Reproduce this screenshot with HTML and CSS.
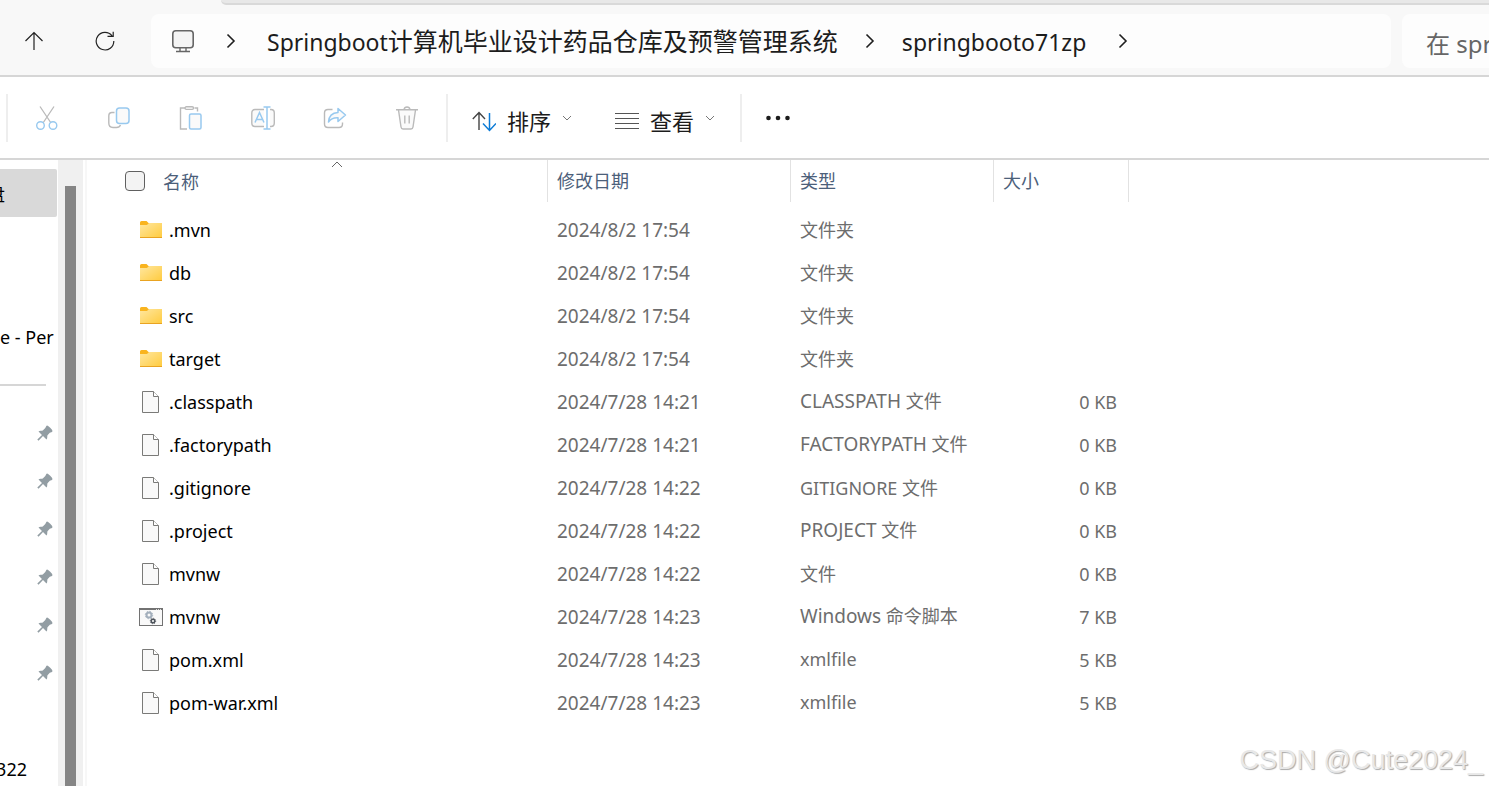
FILE: index.html
```html
<!DOCTYPE html>
<html lang="zh-CN">
<head>
    <meta charset="UTF-8">
    <meta name="viewport" content="width=device-width, initial-scale=1.0">
    <title>springbooto71zp</title>
    <link rel="stylesheet" href="styles.css">
</head>
<body>

    <!-- shared icons -->
    <svg class="sprite" aria-hidden="true">
        <symbol id="folder" viewBox="0 0 24 24">
            <path d="M1 5.5V4.5Q1 3 2.500 3H7.500L9.500 5H23V12H1Z" fill="#f9b41f"/>
            <path d="M1 7H8L10 5H23V20H1Z" fill="url(#folderFill)"/>
            <path d="M1 19.500H23" stroke="#e9a321" stroke-width="1"/>
        </symbol>
        <symbol id="file" viewBox="0 0 24 24">
            <path d="M3.500 1.500H14.500L19.500 6.500V22.500H3.500Z" fill="#f9f9f9" stroke="#7a7a78"/>
            <path d="M14.500 1.500V6.500H19.500" fill="#fff" stroke="#7a7a78"/>
        </symbol>
        <symbol id="script" viewBox="0 0 24 24">
            <rect x="0.500" y="3.500" width="23" height="17" fill="#f9f9f9" stroke="#727272"/>
            <path d="M1 4.500H23" stroke="#727272"/>
            <path d="M17 4.500H23" stroke="#ddd" stroke-dasharray="1 1"/>
            <circle cx="10" cy="10" r="2.500" fill="none" stroke="#a3afbc" stroke-width="2"/>
            <circle cx="10" cy="10" r="3.700" fill="none" stroke="#a3afbc" stroke-dasharray="1.400 1.500"/>
            <circle cx="14" cy="16" r="1.800" fill="none" stroke="#4d535b" stroke-width="1.500"/>
            <circle cx="14" cy="16" r="2.700" fill="none" stroke="#4d535b" stroke-dasharray="1 1.120"/>
        </symbol>
        <symbol id="pin" viewBox="0 0 16 16">
            <path d="M10 0.500C11 0.200 15.500 4.700 15.500 6C15.500 7.500 13.500 7 12.800 7.800L10.500 10.200C10 11 10.700 13.500 9.500 14.500L6 11L1.500 15.700L0.300 14.500L5 10L1.500 6.500C2.500 5.200 5 6 5.800 5.400L8.300 3C9 2.200 8.800 1 10 0.500Z" fill="#929da3"/>
        </symbol>
        <symbol id="chevron" viewBox="0 0 10 16">
            <path d="M1.500 1.500L8 8L1.500 14.500" fill="none" stroke="#1f1f1f" stroke-width="1.600"/>
        </symbol>
        <symbol id="down" viewBox="0 0 10 6">
            <path d="M1 1L5 5L9 1" fill="none" stroke="#777"/>
        </symbol>
        <linearGradient id="folderFill" x1="0" y1="0" x2="1" y2="1">
            <stop offset="0" stop-color="#ffe7a0"/>
            <stop offset="1" stop-color="#ffcb3e"/>
        </linearGradient>
    </svg>

    <div class="tabs"><div class="tab-strip"></div></div>

    <header class="address-row">
        <button class="nav-btn up" aria-label="上移">
            <svg width="20" height="20" viewBox="0 0 20 20"><path d="M10 19V1.500M1.500 10L10 1.500L18.500 10" fill="none" stroke="#222" stroke-width="1.200"/></svg>
        </button>
        <button class="nav-btn" aria-label="刷新">
            <svg width="20" height="20" viewBox="0 0 20 20"><path d="M18.800 10A8.800 8.800 0 1 1 17 4.800M18.200 0.800V5.300H12.500" fill="none" stroke="#222" stroke-width="1.200"/></svg>
        </button>
        <nav class="address">
            <svg class="pc" viewBox="0 0 24 24"><rect x="1.800" y="1.800" width="20.400" height="17" rx="3" fill="#f4f4f4" stroke="#666" stroke-width="1.600"/><path d="M9 19V22M15 19V22M5 22.500H19" fill="none" stroke="#666" stroke-width="1.400"/></svg>
            <svg class="chevron first"><use href="#chevron"/></svg>
            <button class="crumb">Springboot<span class="zh">计算机毕业设计药品仓库及预警管理系统</span></button>
            <svg class="chevron"><use href="#chevron"/></svg>
            <button class="crumb">springbooto71zp</button>
            <svg class="chevron last"><use href="#chevron"/></svg>
        </nav>
        <input class="search" type="text" aria-label="搜索" placeholder="在 springbooto71zp 中搜索">
    </header>

    <div class="toolbar">
        <span class="sep"></span>
        <div class="tools">
            <button class="tool" aria-label="剪切">
                <svg viewBox="0 0 24 24"><g fill="none" stroke="#bababa" stroke-width="1.300"><path d="M5 0.500L16 17M19 0.500L8 17"/></g><g fill="#fff" stroke="#98c9ef" stroke-width="1.400"><circle cx="5.500" cy="19.500" r="3.800"/><circle cx="18" cy="19.500" r="3.800"/></g></svg>
            </button>
            <button class="tool" aria-label="复制">
                <svg viewBox="0 0 24 24"><path d="M7.500 6.500H5Q1.800 6.500 1.800 10V17Q1.800 21.500 6 21.500H9.500Q12.500 21.500 13.500 19" fill="none" stroke="#bababa" stroke-width="1.400"/><rect x="9.500" y="2" width="12.500" height="15.500" rx="3" fill="#fafafa" stroke="#98c9ef" stroke-width="1.500"/></svg>
            </button>
            <button class="tool" aria-label="粘贴">
                <svg viewBox="0 0 24 24"><path d="M8 2H1.500V23H8M15.500 2H18.500V5.500" fill="none" stroke="#bababa" stroke-width="1.400"/><rect x="6" y="0.800" width="8.500" height="2.600" rx="1.300" fill="#fff" stroke="#bababa" stroke-width="1.400"/><rect x="10.500" y="8" width="11.500" height="15" rx="1.500" fill="#fafafa" stroke="#98c9ef" stroke-width="1.500"/></svg>
            </button>
            <button class="tool" aria-label="重命名">
                <svg viewBox="0 0 24 24"><path d="M13 3.500H4Q0.800 3.500 0.800 7V17Q0.800 20.500 4 20.500H13M19 3.500H20Q23.300 3.500 23.300 7V17Q23.300 20.500 20 20.500H19" fill="#fafafa" stroke="#bababa" stroke-width="1.400"/><path d="M4 16.500L8.500 6.500L13 16.500M5.500 13.500H11.500M16 1V23M12.500 1H19.500M12.500 23H19.500" fill="none" stroke="#98c9ef" stroke-width="1.500"/></svg>
            </button>
            <button class="tool" aria-label="共享">
                <svg viewBox="0 0 24 24"><path d="M9.500 3.500H5Q1.500 3.500 1.500 7V18Q1.500 21.500 5 21.500H16Q19.500 21.500 19.500 18V16.500" fill="none" stroke="#bababa" stroke-width="1.400"/><path d="M15 2.500L22.500 9L15 15.500V11.800Q8.500 11.500 5.500 16Q6 7 15 6.500Z" fill="#fafafa" stroke="#98c9ef" stroke-width="1.500" stroke-linejoin="round"/></svg>
            </button>
            <button class="tool" aria-label="删除">
                <svg viewBox="0 0 24 24"><path d="M3.500 4L6 21Q6.300 23 8 23H16Q17.700 23 18 21L20.500 4" fill="#fafafa" stroke="#bababa" stroke-width="1.400"/><path d="M1 3.800H23M9 3.500Q9.500 1 12 1T15 3.500M9.800 9.500V17.500M14.200 9.500V17.500" fill="none" stroke="#bababa" stroke-width="1.400"/></svg>
            </button>
        </div>
        <span class="sep"></span>
        <div class="menus">
            <button class="menu">
                <svg class="menu-icon" viewBox="0 0 24 24"><path d="M7 21V3.500M0.800 10L7 3.500L13 10" fill="none" stroke="#444" stroke-width="1.400"/><path d="M17.500 4V21.500M11 14.500L17.500 21.500L24 14.500" fill="none" stroke="#0c7bd6" stroke-width="1.500"/></svg>
                <span>排序</span>
                <svg class="down"><use href="#down"/></svg>
            </button>
            <button class="menu">
                <svg class="menu-icon" viewBox="0 0 24 24"><path d="M0 4.500H24M0 9.500H24M0 14.500H24M0 19.500H24" fill="none" stroke="#555" stroke-width="1.200"/></svg>
                <span>查看</span>
                <svg class="down"><use href="#down"/></svg>
            </button>
        </div>
        <span class="sep"></span>
        <button class="more" aria-label="更多">
            <svg viewBox="0 0 24 24"><g fill="#1c1c1c"><circle cx="2.500" cy="12" r="2.300"/><circle cx="12" cy="12" r="2.300"/><circle cx="21.500" cy="12" r="2.300"/></g></svg>
        </button>
    </div>

    <div class="main">
        <aside class="sidebar">
            <div class="side-item selected"><span>网盘</span></div>
            <div class="side-item"></div>
            <div class="side-item"></div>
            <div class="side-item"><span>e - Per</span></div>
            <div class="side-item"><hr></div>
            <div class="side-item pinned"><svg><use href="#pin"/></svg></div>
            <div class="side-item pinned"><svg><use href="#pin"/></svg></div>
            <div class="side-item pinned"><svg><use href="#pin"/></svg></div>
            <div class="side-item pinned"><svg><use href="#pin"/></svg></div>
            <div class="side-item pinned"><svg><use href="#pin"/></svg></div>
            <div class="side-item pinned"><svg><use href="#pin"/></svg></div>
            <div class="side-item"></div>
            <div class="side-item recent"><span>322</span></div>
        </aside>
        <div class="scrollbar"><div class="thumb"></div></div>

        <div class="content">
            <table class="files">
                <thead>
                    <tr>
                        <th class="col-name">
                            <svg class="sort-mark" viewBox="0 0 12 7"><path d="M1 6L6 1L11 6" fill="none" stroke="#666"/></svg>
                            <div class="name-head"><input type="checkbox" id="selectAll" aria-label="全选"><label for="selectAll">名称</label></div>
                        </th>
                        <th class="col-date">修改日期</th>
                        <th class="col-type">类型</th>
                        <th class="col-size">大小</th>
                    </tr>
                </thead>
                <tbody>
                    <tr><td><div class="name"><svg><use href="#folder"/></svg>.mvn</div></td><td class="date">2024/8/2 17:54</td><td class="type">文件夹</td><td></td></tr>
                    <tr><td><div class="name"><svg><use href="#folder"/></svg>db</div></td><td class="date">2024/8/2 17:54</td><td class="type">文件夹</td><td></td></tr>
                    <tr><td><div class="name"><svg><use href="#folder"/></svg>src</div></td><td class="date">2024/8/2 17:54</td><td class="type">文件夹</td><td></td></tr>
                    <tr><td><div class="name"><svg><use href="#folder"/></svg>target</div></td><td class="date">2024/8/2 17:54</td><td class="type">文件夹</td><td></td></tr>
                    <tr><td><div class="name"><svg><use href="#file"/></svg>.classpath</div></td><td class="date">2024/7/28 14:21</td><td class="type"><span class="ext">CLASSPATH</span> 文件</td><td class="size">0 KB</td></tr>
                    <tr><td><div class="name"><svg><use href="#file"/></svg>.factorypath</div></td><td class="date">2024/7/28 14:21</td><td class="type"><span class="ext">FACTORYPATH</span> 文件</td><td class="size">0 KB</td></tr>
                    <tr><td><div class="name"><svg><use href="#file"/></svg>.gitignore</div></td><td class="date">2024/7/28 14:22</td><td class="type">GITIGNORE 文件</td><td class="size">0 KB</td></tr>
                    <tr><td><div class="name"><svg><use href="#file"/></svg>.project</div></td><td class="date">2024/7/28 14:22</td><td class="type"><span class="ext">PROJECT</span> 文件</td><td class="size">0 KB</td></tr>
                    <tr><td><div class="name"><svg><use href="#file"/></svg>mvnw</div></td><td class="date">2024/7/28 14:22</td><td class="type">文件</td><td class="size">0 KB</td></tr>
                    <tr><td><div class="name"><svg><use href="#script"/></svg>mvnw</div></td><td class="date">2024/7/28 14:23</td><td class="type"><span class="ext">Windows</span> 命令脚本</td><td class="size">7 KB</td></tr>
                    <tr><td><div class="name"><svg><use href="#file"/></svg>pom.xml</div></td><td class="date">2024/7/28 14:23</td><td class="type">xmlfile</td><td class="size">5 KB</td></tr>
                    <tr><td><div class="name"><svg><use href="#file"/></svg>pom-war.xml</div></td><td class="date">2024/7/28 14:23</td><td class="type">xmlfile</td><td class="size">5 KB</td></tr>
                </tbody>
            </table>
        </div>
    </div>

    <div class="watermark">CSDN @Cute2024_</div>

</body>
</html>
```
FILE: styles.css
```css
* {
    box-sizing: border-box;
}

body {
    margin: 0;
    height: 100vh;
    display: flex;
    flex-direction: column;
    overflow: hidden;
    background-color: #ffffff;
    color: #000000;
    font-family: "Noto Sans", "Noto Sans CJK SC", sans-serif;
    font-size: 18px;
}

button {
    border: none;
    padding: 0;
    background: none;
    font-family: inherit;
    color: #1c1c1c;
    cursor: pointer;
}

svg {
    display: block;
    flex: none;
}

.sprite {
    position: absolute;
    width: 0;
    height: 0;
}

/* tab strip */
.tabs {
    background-color: #f8f8f8;
    padding-left: 221px;
}

.tab-strip {
    height: 5px;
    background-color: #e8e8e8;
    border-bottom: 2px solid #d9d9d9;
    border-bottom-left-radius: 5px;
}

/* address bar */
.address-row {
    display: flex;
    align-items: center;
    height: 72px;
    padding-top: 1px;
    background-color: #f8f8f8;
    border-bottom: 2px solid #d6d6d6;
}

.nav-btn {
    display: flex;
    justify-content: center;
    align-items: center;
    width: 76px;
    height: 48px;
}

.nav-btn.up {
    width: 67px;
}

.address {
    flex: 1;
    display: flex;
    align-items: center;
    height: 54px;
    margin: 0 11px 0 8px;
    padding-left: 20px;
    border-radius: 8px;
    background-color: #fdfdfd;
}

.pc {
    width: 24px;
    height: 24px;
}

.chevron {
    width: 10px;
    height: 16px;
    margin: 0 27px;
}

.chevron.first {
    margin: 0 31px;
}

.chevron.last {
    margin-left: 32px;
}

.crumb {
    padding-top: 2px;
    font-size: 23px;
    line-height: 32px;
    white-space: nowrap;
}

.zh {
    font-size: 25px;
}

.search {
    width: 87px;
    height: 54px;
    padding: 6px 0 0 24px;
    border: none;
    border-radius: 8px 0 0 8px;
    background-color: #fdfdfd;
    font-family: inherit;
    font-size: 24px;
}

.search::placeholder {
    color: #666666;
    opacity: 1;
}

/* command bar */
.toolbar {
    display: flex;
    align-items: center;
    height: 83px;
    padding-left: 6px;
    border-bottom: 2px solid #d6d6d6;
}

.sep {
    width: 2px;
    height: 48px;
    background-color: #eeeeee;
}

.tools {
    display: flex;
    padding: 0 3px;
}

.tool {
    display: flex;
    justify-content: center;
    align-items: center;
    width: 72px;
    height: 48px;
}

.tool svg,
.menu-icon,
.more svg {
    width: 24px;
    height: 24px;
}

.menus {
    display: flex;
    gap: 43px;
    padding: 6px 25px 0 24px;
}

.menu {
    display: flex;
    align-items: center;
    gap: 11px;
    font-size: 22px;
    line-height: 32px;
}

.down {
    width: 10px;
    height: 6px;
    margin-bottom: 6px;
}

.more {
    padding: 12px 24px;
}

/* navigation pane */
.main {
    flex: 1;
    display: flex;
    min-height: 0;
}

.sidebar {
    width: 58px;
    padding: 9px 1px 0 0;
    overflow: hidden;
}

.side-item {
    display: flex;
    align-items: center;
    height: 48px;
    overflow: hidden;
    white-space: nowrap;
}

.side-item hr {
    width: 46px;
    height: 2px;
    margin: 0;
    border: none;
    background-color: #d6d6d6;
}

.selected {
    justify-content: flex-end;
    padding-right: 52px;
    background-color: #d9d9d9;
    border-radius: 0 2px 2px 0;
}

.pinned {
    justify-content: flex-end;
    padding-right: 4px;
}

.pinned svg {
    width: 16px;
    height: 16px;
}

.recent {
    justify-content: flex-end;
    padding-right: 30px;
}

.scrollbar {
    width: 25px;
    padding: 26px 7px 0;
    background-color: #f0f0f0;
}

.thumb {
    height: 100%;
    background-color: #858585;
}

/* file list */
.content {
    flex: 1;
    margin-left: 2px;
    border-left: 2px solid #f7f7f7;
}

.files {
    border-collapse: separate;
    border-spacing: 0;
    table-layout: fixed;
    width: 1042px;
}

.files th {
    height: 42px;
    padding: 0 9px 2px;
    border-right: 1px solid #e2e2e2;
    color: #4c607a;
    font-weight: normal;
    text-align: left;
}

.files .col-name {
    position: relative;
    width: 461px;
    padding: 0 0 0 38px;
}

.col-date {
    width: 243px;
}

.col-type {
    width: 203px;
}

.col-size {
    width: 135px;
}

.sort-mark {
    position: absolute;
    top: 1px;
    left: 244px;
    width: 12px;
    height: 7px;
}

.name-head {
    display: flex;
    align-items: center;
    gap: 18px;
}

.name-head input {
    appearance: none;
    width: 20px;
    height: 20px;
    margin: 0;
    border: 1px solid #606060;
    border-radius: 4px;
    background-color: #f3f3f3;
}

.files td {
    height: 43px;
    padding: 0 9px;
    color: #6d6d6d;
    white-space: nowrap;
}

.files tbody::before {
    content: "";
    display: block;
    height: 6px;
}

.name {
    display: flex;
    align-items: center;
    gap: 6px;
    padding-left: 43px;
    color: #000000;
}

.name svg {
    width: 24px;
    height: 24px;
}

.files .date,
.ext {
    font-size: 19px;
}

.files .type {
    padding-bottom: 2px;
}

.files .size {
    padding-right: 12px;
    text-align: right;
}

.watermark {
    position: absolute;
    right: 6px;
    bottom: 10px;
    color: #e8e8e8;
    font-family: "Liberation Sans", Arial, sans-serif;
    font-size: 27px;
    line-height: 32px;
    text-shadow: 1px 1px 1px #aaaaaa;
}
```
